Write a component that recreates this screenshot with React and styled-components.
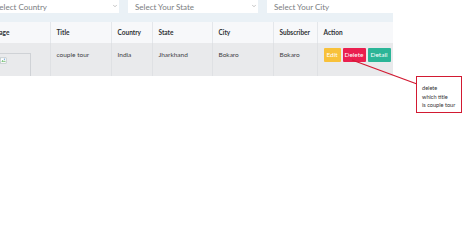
import styled, { createGlobalStyle } from 'styled-components';
import { ChevronDown } from 'lucide-react';

const GlobalStyle = createGlobalStyle`
  html, body {
    margin: 0;
    padding: 0;
    background: #fff;
  }
  body {
    font-family: Lato, "Open Sans", sans-serif;
  }
`;

const columns = [
  { key: 'image', label: 'Image', width: 64 },
  { key: 'title', label: 'Title', width: 61 },
  { key: 'country', label: 'Country', width: 41 },
  { key: 'state', label: 'State', width: 60 },
  { key: 'city', label: 'City', width: 61 },
  { key: 'subscriber', label: 'Subscriber', width: 44 },
  { key: 'action', label: 'Action', width: 76 }
];

const tours = [
  {
    id: 1,
    title: 'couple tour',
    country: 'India',
    state: 'Jharkhand',
    city: 'Bokaro',
    subscriber: 'Bokaro'
  }
];

const Page = styled.div`
  position: relative;
  width: 474px;
  height: 220px;
  overflow: hidden;
  background: #fff;
`;

const Content = styled.div`
  width: 407px;
  margin: -4px 0 0 -14px;
`;

const FilterBar = styled.div`
  display: flex;
  gap: 9px;
  padding-bottom: 9px;
  background: #eaf1f6;
`;

const SelectBox = styled.div`
  position: relative;
  display: flex;
  align-items: center;
  width: ${(p) => p.$width}px;
  height: 17px;
  padding: 4px 0 0 ${(p) => p.$pad}px;
  box-sizing: border-box;
  background: #fff;
  color: #7a7d80;
  font-size: 8px;
`;

const Chevron = styled(ChevronDown)`
  position: absolute;
  right: 1px;
  top: 7px;
  color: #888;
`;

const Table = styled.table`
  width: 407px;
  border-collapse: collapse;
  table-layout: fixed;
  font-size: 6.5px;
`;

const HeadCell = styled.th`
  width: ${(p) => p.$width}px;
  height: 21px;
  padding: 0 6px;
  box-sizing: border-box;
  text-align: left;
  font-weight: 700;
  color: #2f3235;
  background: #f7f8fa;
  border-right: 1px solid #e4e7eb;
  &:last-child {
    border-right: none;
  }
`;

const Row = styled.tr`
  background: #e9eaec;
`;

const Cell = styled.td`
  vertical-align: top;
  padding: 5px 6px 0;
  line-height: 14px;
  color: #3f4245;
  border-right: 1px solid #dfe1e4;
  &:last-child {
    border-right: none;
    padding-right: 2px;
  }
`;

const ImageBox = styled.div`
  width: 39px;
  height: 23px;
  margin-top: 5px;
  box-sizing: border-box;
  border: 1px solid #cfd2d6;
  border-bottom: none;
  padding: 1px 0 0 7px;
`;

const Actions = styled.div`
  display: flex;
  gap: 2px;
`;

const ActionButton = styled.button`
  width: ${(p) => p.$width}px;
  height: 14px;
  padding: 0;
  border: none;
  border-radius: 1px;
  background: ${(p) => p.$bg};
  color: #fff;
  font-family: inherit;
  font-size: 6.5px;
  line-height: 14px;
`;

const Overlay = styled.svg`
  position: absolute;
  left: 0;
  top: 0;
  pointer-events: none;
`;

const Note = styled.div`
  position: absolute;
  left: 416px;
  top: 76px;
  width: 46px;
  height: 37px;
  box-sizing: border-box;
  padding: 7px 0 0 5px;
  border: 1.5px solid #d21a32;
  background: #fff;
  color: #333;
  font-size: 5.6px;
  line-height: 8.5px;
`;

function BrokenImage() {
  return (
    <svg width="7" height="7" viewBox="0 0 16 16">
      <rect x="1" y="2" width="13" height="12" fill="#fff" stroke="#9aa" strokeWidth="1" />
      <path d="M3 11l3-4 3 3 2-2 2 3z" fill="#5bb25b" />
      <circle cx="10" cy="5" r="1.3" fill="#4a8fd8" />
    </svg>
  );
}

export default function App() {
  return (
    <Page>
      <GlobalStyle />
      <Content>
        <FilterBar>
          <SelectBox $width={133} $pad={9}>
            Select Country
            <Chevron size={6} strokeWidth={2} />
          </SelectBox>
          <SelectBox $width={130} $pad={7}>
            Select Your State
            <Chevron size={6} strokeWidth={2} />
          </SelectBox>
          <SelectBox $width={126} $pad={7}>
            Select Your City
          </SelectBox>
        </FilterBar>
        <Table>
          <thead>
            <tr>
              {columns.map((col) => (
                <HeadCell key={col.key} $width={col.width}>
                  {col.label}
                </HeadCell>
              ))}
            </tr>
          </thead>
          <tbody>
            {tours.map((tour) => (
              <Row key={tour.id}>
                <Cell>
                  <ImageBox>
                    <BrokenImage />
                  </ImageBox>
                </Cell>
                <Cell>{tour.title}</Cell>
                <Cell>{tour.country}</Cell>
                <Cell>{tour.state}</Cell>
                <Cell>{tour.city}</Cell>
                <Cell>{tour.subscriber}</Cell>
                <Cell>
                  <Actions>
                    <ActionButton $width={17} $bg="#f8c13a">Edit</ActionButton>
                    <ActionButton $width={23} $bg="#ea1f4f">Delete</ActionButton>
                    <ActionButton $width={23} $bg="#2bb597">Detail</ActionButton>
                  </Actions>
                </Cell>
              </Row>
            ))}
          </tbody>
        </Table>
      </Content>
      <Overlay width="474" height="220">
        <line x1="352" y1="60" x2="417" y2="84" stroke="#d21a32" strokeWidth="1.3" />
      </Overlay>
      <Note>
        delete
        <br />
        which title
        <br />
        is couple tour
      </Note>
    </Page>
  );
}
